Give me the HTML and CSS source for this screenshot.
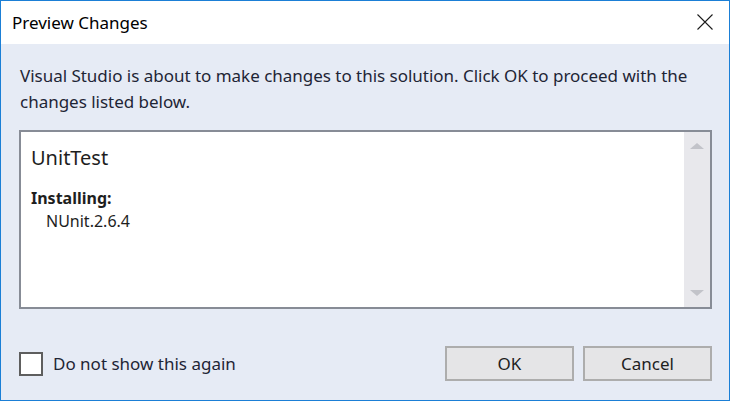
FILE: index.html
```html
<!DOCTYPE html>
<html>
<head>
<meta charset="utf-8">
<link rel="stylesheet" href="styles.css">
</head>
<body>
<div class="window">
  <div class="titlebar">
    <span class="title">Preview Changes</span>
    <svg class="close" width="16" height="16" viewBox="0 0 16 16"><path d="M0.5 0.5 L15.5 15.5 M15.5 0.5 L0.5 15.5" stroke="#1b1b1b" stroke-width="1.1" fill="none"/></svg>
  </div>
  <div class="content">
    <p class="message">Visual Studio is about to make changes to this solution. Click OK to proceed with the changes listed below.</p>
    <div class="listbox">
      <div class="list-content">
        <div class="project">UnitTest</div>
        <div class="section">Installing:</div>
        <div class="pkg">NUnit.2.6.4</div>
      </div>
      <div class="scrollbar">
        <svg width="16" height="8" viewBox="0 0 16 8"><path d="M1 7 L8 1 L15 7 Z" fill="#c2c3c9"/></svg>
        <svg width="16" height="8" viewBox="0 0 16 8"><path d="M1 1 L8 7 L15 1 Z" fill="#c2c3c9"/></svg>
      </div>
    </div>
    <div class="footer">
      <label class="check"><span class="box"></span><span>Do not show this again</span></label>
      <div class="buttons">
        <button class="btn">OK</button>
        <button class="btn">Cancel</button>
      </div>
    </div>
  </div>
</div>
</body>
</html>
```
FILE: styles.css
```css
html, body {
  margin: 0;
  padding: 0;
}
body {
  width: 730px;
  height: 401px;
  font-family: "Noto Sans", "Open Sans", sans-serif;
  color: #1e1e1e;
}
.window {
  width: 730px;
  height: 401px;
  box-sizing: border-box;
  border: 1px solid #1b7fd6;
  background: #e6ebf5;
  display: flex;
  flex-direction: column;
}
.titlebar {
  height: 43px;
  background: #ffffff;
  display: flex;
  align-items: center;
  justify-content: space-between;
  padding: 0 16px 0 11px;
  flex: none;
}
.title {
  font-size: 17px;
  color: #000;
  margin-top: 0;
}
.close {
  margin-top: -1px;
}
.content {
  flex: 1;
  padding: 0 17px 0 18px;
  display: flex;
  flex-direction: column;
}
.message {
  margin: 19px 0 0 1px;
  font-size: 17px;
  line-height: 26px;
  color: #1e2535;
  letter-spacing: -0.02px;
}
.listbox {
  margin-top: 15px;
  height: 179px;
  box-sizing: border-box;
  border: 2px solid #878c96;
  background: #fff;
  display: flex;
}
.list-content {
  flex: 1;
  padding: 12px 10px;
}
.project {
  font-size: 20px;
  line-height: 28px;
  color: #1e1e1e;
}
.section {
  margin-top: 15px;
  font-size: 16px;
  font-weight: bold;
  line-height: 22px;
}
.pkg {
  padding-left: 15px;
  font-size: 16px;
  line-height: 24px;
}
.scrollbar {
  width: 26px;
  background: #e8e8ec;
  display: flex;
  flex-direction: column;
  justify-content: space-between;
  align-items: center;
  padding: 10px 0 10px;
}
.footer {
  margin-top: 37px;
  display: flex;
  align-items: center;
  justify-content: space-between;
}
.check {
  display: flex;
  align-items: center;
  gap: 10px;
  font-size: 17px;
  color: #1e2535;
}
.box {
  width: 24px;
  height: 24px;
  box-sizing: border-box;
  border: 2px solid #5e5e5e;
  background: #fff;
}
.buttons {
  display: flex;
  gap: 9px;
}
.btn {
  width: 129px;
  height: 35px;
  box-sizing: border-box;
  border: 2px solid #adadad;
  background: #e5e5e7;
  font-family: "Noto Sans", "Open Sans", sans-serif;
  font-size: 17px;
  color: #1e1e1e;
  padding: 0;
}
```
